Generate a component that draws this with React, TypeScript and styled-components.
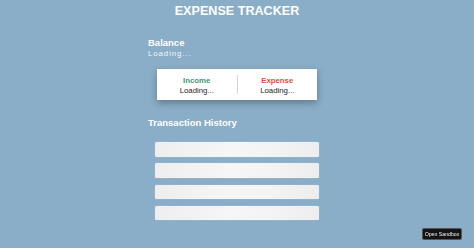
import React from "react";
import styled, { createGlobalStyle } from "styled-components";

const GlobalStyle = createGlobalStyle`
  html, body {
    margin: 0;
    padding: 0;
    background: #8aaec8;
    font-family: "Liberation Sans", Arial, sans-serif;
  }
  * { box-sizing: border-box; }
`;

const Page = styled.div`
  width: 100%;
  min-height: 248px;
  padding-top: 4px;
`;

const Title = styled.h1`
  margin: 0;
  font-size: 12.6px;
  line-height: 15px;
  font-weight: 700;
  color: #ffffff;
  text-align: center;
`;

const Container = styled.div`
  width: 178px;
  margin: 18.2px auto 0;
  display: flex;
  flex-direction: column;
`;

const Heading = styled.h4<{ $top?: number }>`
  margin: ${(p) => p.$top ?? 0}px 0 0;
  font-size: 9.5px;
  line-height: 11px;
  font-weight: 700;
  color: #ffffff;
`;

const BalanceValue = styled.div`
  margin-top: 1.2px;
  font-size: 7.8px;
  line-height: 9px;
  letter-spacing: 0.95px;
  color: rgba(255, 255, 255, 0.93);
`;

const Card = styled.div`
  margin: 10.5px 9px 0;
  height: 31px;
  background: #ffffff;
  box-shadow: 0 3px 7px rgba(0, 0, 0, 0.3);
  display: flex;
  align-items: flex-start;
  padding-top: 7px;
`;

const Column = styled.div`
  flex: 1;
  display: flex;
  flex-direction: column;
  align-items: center;
  gap: 1px;
`;

const Divider = styled.div`
  width: 1px;
  height: 19px;
  margin-top: -0.5px;
  background: #d4d4d4;
`;

const Label = styled.div<{ $color: string }>`
  font-size: 7.8px;
  line-height: 9px;
  font-weight: 700;
  color: ${(p) => p.$color};
`;

const Amount = styled.div`
  font-size: 7.8px;
  line-height: 9px;
  color: #262626;
`;

const List = styled.ul`
  list-style: none;
  margin: 14px 0 0;
  padding: 0 7px;
  display: flex;
  flex-direction: column;
  gap: 6.8px;
`;

const SkeletonRow = styled.li`
  height: 14.5px;
  border-radius: 1.5px;
  background: linear-gradient(90deg, #eeeeee 0%, #f6f6f6 45%, #f4f4f4 70%, #ededed 100%);
  box-shadow: 0 0 1px rgba(255, 255, 255, 0.6);
`;

const SandboxButton = styled.button`
  position: fixed;
  right: 12px;
  bottom: 8px;
  width: 40px;
  height: 12px;
  padding: 0;
  border: 1px solid rgba(255, 255, 255, 0.28);
  border-radius: 2px;
  background: #141414;
  color: #f2f2f2;
  font-family: "Liberation Sans", Arial, sans-serif;
  font-size: 5.2px;
  line-height: 10px;
  text-align: center;
  cursor: pointer;
`;

export default function App() {
  return (
    <>
      <GlobalStyle />
      <Page>
        <Title>EXPENSE TRACKER</Title>
        <Container>
          <Heading>Balance</Heading>
          <BalanceValue>Loading...</BalanceValue>
          <Card>
            <Column>
              <Label $color="#3d9970">Income</Label>
              <Amount>Loading...</Amount>
            </Column>
            <Divider />
            <Column>
              <Label $color="#e74c3c">Expense</Label>
              <Amount>Loading...</Amount>
            </Column>
          </Card>
          <Heading $top={17.2}>Transaction History</Heading>
          <List>
            {[0, 1, 2, 3].map((i) => (
              <SkeletonRow key={i} />
            ))}
          </List>
        </Container>
      </Page>
      <SandboxButton>Open Sandbox</SandboxButton>
    </>
  );
}
